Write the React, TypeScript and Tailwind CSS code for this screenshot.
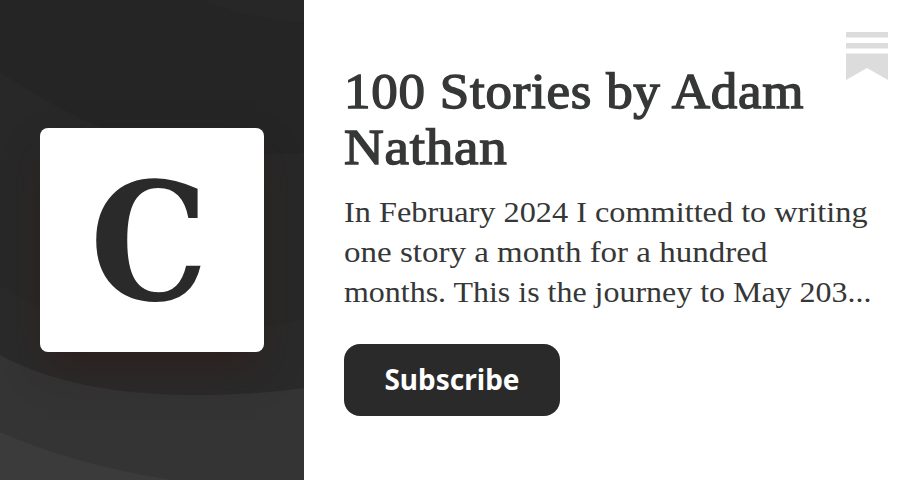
import React from "react";

const titleLines = [
  { text: "100 Stories by Adam", className: "scale-x-[1.06]" },
  { text: "Nathan", className: "scale-x-[1.1]" },
];

const descriptionLines = [
  { text: "In February 2024 I committed to writing", className: "scale-x-[1.076]" },
  { text: "one story a month for a hundred", className: "scale-x-[1.1]" },
  { text: "months. This is the journey to May 203...", className: "scale-x-[1.065]" },
];

const Waves: React.FC = () => (
  <svg
    className="absolute inset-0 h-full w-full"
    viewBox="0 0 304 480"
    fill="none"
    aria-hidden="true"
  >
    <rect width="304" height="480" fill="#252525" />
    <path d="M203 0Q250 20 304 22V0Z" fill="#272727" />
    <path d="M0 72Q50 105 93 124Q200 160 304 153V480H0Z" fill="#282828" />
    <path d="M0 285Q60 325 150 333Q240 333 304 319V480H0Z" fill="#2a2a2a" />
    <path d="M0 355C50 382 115 395 196 395Q256 395 304 388V480H0Z" fill="#343434" />
    <path d="M0 432Q75 465 172 480H0Z" fill="#3b3b3b" />
  </svg>
);

const Logo: React.FC = () => (
  <div className="relative h-56 w-56 rounded-lg bg-white shadow-[0_20px_36px_-8px_rgba(48,26,22,0.65)]">
    <svg className="h-full w-full" viewBox="0 0 224 224">
      <text
        transform="translate(50 172) scale(0.91 1)"
        fontSize="163"
        fontWeight="700"
        fill="#2a2a2a"
        className="font-['DejaVu_Serif',serif]"
      >
        C
      </text>
    </svg>
  </div>
);

const App: React.FC = () => {
  return (
    <div className="flex h-[480px] w-[920px] overflow-hidden bg-white">
      <aside className="relative flex w-[304px] shrink-0 items-center justify-center overflow-hidden">
        <Waves />
        <Logo />
      </aside>

      <main className="flex flex-1 justify-between pr-8 pl-10">
        <div className="flex w-0 flex-col items-start pt-[63px]">
          <h1 className="font-['Liberation_Serif',serif] text-[50px] leading-14 tracking-[0.7px] whitespace-nowrap text-[#363737] [-webkit-text-stroke:1.4px_#363737]">
            {titleLines.map((line) => (
              <span key={line.text} className={`block w-max origin-left ${line.className}`}>
                {line.text}
              </span>
            ))}
          </h1>
          <p className="mt-[17px] font-['Liberation_Serif',serif] text-[30px] leading-10 whitespace-nowrap text-[#363737]">
            {descriptionLines.map((line) => (
              <span key={line.text} className={`block w-max origin-left ${line.className}`}>
                {line.text}
              </span>
            ))}
          </p>
          <button className="mt-8 flex h-18 w-54 items-center justify-center rounded-2xl bg-[#2a2a2a] pb-0.5 font-['Noto_Sans',sans-serif] text-[28px] font-bold text-white">
            Subscribe
          </button>
        </div>

        <svg
          className="mt-8 h-12 w-[42px] shrink-0"
          viewBox="0 0 42 48"
          fill="#dcdcdc"
          aria-hidden="true"
        >
          <path d="M0 0H42V5.6H0ZM0 11H42V16.4H0ZM0 21.6H42V48L21 36L0 48Z" />
        </svg>
      </main>
    </div>
  );
};

export default App;
